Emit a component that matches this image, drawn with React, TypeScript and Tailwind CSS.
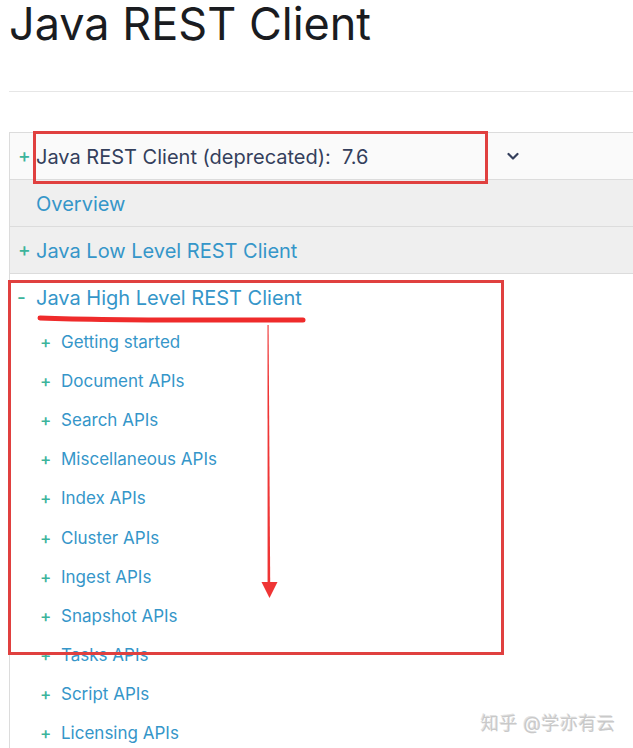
import React from 'react';

const subItems = [
  'Getting started',
  'Document APIs',
  'Search APIs',
  'Miscellaneous APIs',
  'Index APIs',
  'Cluster APIs',
  'Ingest APIs',
  'Snapshot APIs',
  'Tasks APIs',
  'Script APIs',
  'Licensing APIs',
];

const Chevron = () => (
  <svg width="14" height="14" viewBox="0 0 14 14" fill="none" className="ml-auto mr-[113px]">
    <path d="M2.5 5L7 9.5L11.5 5" stroke="#343f5c" strokeWidth="2.2" strokeLinecap="round" strokeLinejoin="round" />
  </svg>
);

export default function App() {
  return (
    <div
      className="relative w-[633px] h-[748px] overflow-hidden bg-white"
      style={{ fontFamily: 'Inter, "Noto Sans", "Noto Sans CJK SC", sans-serif' }}
    >
      {/* Page title */}
      <h1 className="pl-[9px] text-[45px] leading-[48px] font-normal text-[#1a1c21]">
        Java REST Client
      </h1>
      <div className="ml-[9px] mt-[43px] h-px bg-[#e6e6e6]" />

      {/* Sidebar tree */}
      <nav className="ml-[9px] mt-[40px] border-l border-[#dcdcdc]">
        <div className="flex items-center h-[48px] bg-[#fafafa] border-t border-b border-[#dcdcdc]">
          <span className="w-[26px] pl-[8px] text-[19px] font-medium text-[#3cb49b]">+</span>
          <span className="text-[20px] text-[#343f5c] pt-[2px]">Java REST Client (deprecated):&nbsp; 7.6</span>
          <Chevron />
        </div>
        <div className="flex items-center h-[47px] bg-[#efefef] border-b border-[#dcdcdc]">
          <span className="w-[26px]" />
          <span className="text-[20px] text-[#3596c9] pt-[2px]">Overview</span>
        </div>
        <div className="flex items-center h-[47px] bg-[#efefef] border-b border-[#dcdcdc]">
          <span className="w-[26px] pl-[8px] text-[19px] font-medium text-[#3cb49b]">+</span>
          <span className="text-[20px] text-[#3596c9] pt-[2px]">Java Low Level REST Client</span>
        </div>
        <div className="flex items-center h-[48px]">
          <span className="w-[26px] pl-[7px] text-[19px] font-medium text-[#3cb49b]">-</span>
          <span className="text-[20px] text-[#3596c9]">Java High Level REST Client</span>
        </div>
        <ul className="pt-[1px]">
          {subItems.map((item) => (
            <li key={item} className="flex items-center h-[39.15px]">
              <span className="w-[51px] pl-[30px] text-[17px] font-medium text-[#3cb49b]">+</span>
              <span className="text-[17px] text-[#3596c9]">{item}</span>
            </li>
          ))}
        </ul>
      </nav>

      {/* Red annotations */}
      <div className="absolute left-[33px] top-[131px] w-[455px] h-[53px] border-[3px] border-[#e0403f]" />
      <div className="absolute left-[8px] top-[280px] w-[496px] h-[375px] border-[3px] border-[#e0403f]" />
      <svg className="absolute left-0 top-0" width="633" height="748" viewBox="0 0 633 748">
        <path
          d="M40 318 C 120 321, 220 320, 303 320"
          stroke="#ef2b2b"
          strokeWidth="5"
          strokeLinecap="round"
          fill="none"
        />
        <path d="M267.5 325 L268.6 325 L270.2 584 L267.6 584 Z" fill="#ef3535" />
        <path d="M261.5 582 L277.5 582 L269.5 598 Z" fill="#ef3535" />
      </svg>

      {/* Watermark */}
      <div
        className="absolute left-[481px] top-[710px] text-[18px] text-[#c9c9c9] tracking-[0.5px]"
        style={{ textShadow: '1px 1px 0 #ffffff, -1px -1px 0 #e2e2e2' }}
      >
        知乎 @学亦有云
      </div>
    </div>
  );
}
